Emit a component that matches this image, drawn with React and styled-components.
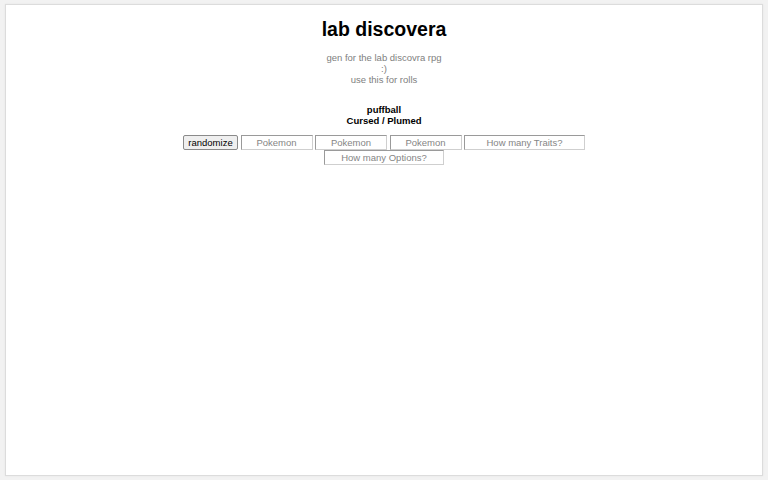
import React from 'react';
import styled, { createGlobalStyle } from 'styled-components';

const GlobalStyle = createGlobalStyle`
  html, body {
    margin: 0;
    padding: 0;
    background: #f2f2f2;
  }
  body {
    font-family: 'Liberation Sans', Arial, sans-serif;
  }
`;

const Page = styled.div`
  height: 480px;
  box-sizing: border-box;
  padding: 4px 5px 4px 5px;
`;

const Card = styled.main`
  height: 100%;
  box-sizing: border-box;
  background: #ffffff;
  border: 1px solid #dcdcdc;
  box-shadow: 0 0 2px rgba(0, 0, 0, 0.06);
  display: flex;
  flex-direction: column;
  align-items: center;
  padding-top: 13px;
  text-align: center;
`;

const Title = styled.h1`
  margin: 0;
  font-size: 19.5px;
  line-height: 22px;
  font-weight: 700;
  color: #000;
`;

const Intro = styled.p`
  margin: 12px 0 0;
  font-size: 9.5px;
  line-height: 11px;
  color: #808080;
`;

const Result = styled.div`
  margin-top: 19px;
  font-size: 9.5px;
  line-height: 11px;
  font-weight: 700;
  color: #000;
`;

const Controls = styled.form`
  margin-top: 9px;
  width: 410px;
  display: flex;
  flex-wrap: wrap;
  justify-content: center;
  column-gap: 2.5px;
  row-gap: 0;
`;

const RollButton = styled.button`
  height: 15px;
  width: 55px;
  box-sizing: border-box;
  padding: 0;
  font-family: 'Liberation Sans', Arial, sans-serif;
  font-size: 9.5px;
  line-height: 13px;
  color: #000;
  background: #efefef;
  border: 1px solid #8a8a8a;
  border-radius: 2px;
  cursor: pointer;
`;

const Field = styled.input`
  height: 15px;
  width: ${p => p.$w}px;
  box-sizing: border-box;
  padding: 0;
  font-family: 'Liberation Sans', Arial, sans-serif;
  font-size: 9.5px;
  text-align: center;
  color: #333;
  background: #fff;
  border: 1px solid;
  border-color: #9a9a9a #cfcfcf #cfcfcf #9a9a9a;
  &::placeholder {
    color: #858585;
  }
`;

export default function App() {
  return (
    <>
      <GlobalStyle />
      <Page>
        <Card>
          <Title>lab discovera</Title>
          <Intro>
            gen for the lab discovra rpg
            <br />
            :)
            <br />
            use this for rolls
          </Intro>
          <Result>
            puffball
            <br />
            Cursed / Plumed
          </Result>
          <Controls onSubmit={e => e.preventDefault()}>
            <RollButton type="button">randomize</RollButton>
            <Field $w={72} placeholder="Pokemon" />
            <Field $w={72} placeholder="Pokemon" />
            <Field $w={72} placeholder="Pokemon" />
            <Field $w={121} placeholder="How many Traits?" />
            <Field $w={120} placeholder="How many Options?" />
          </Controls>
        </Card>
      </Page>
    </>
  );
}
